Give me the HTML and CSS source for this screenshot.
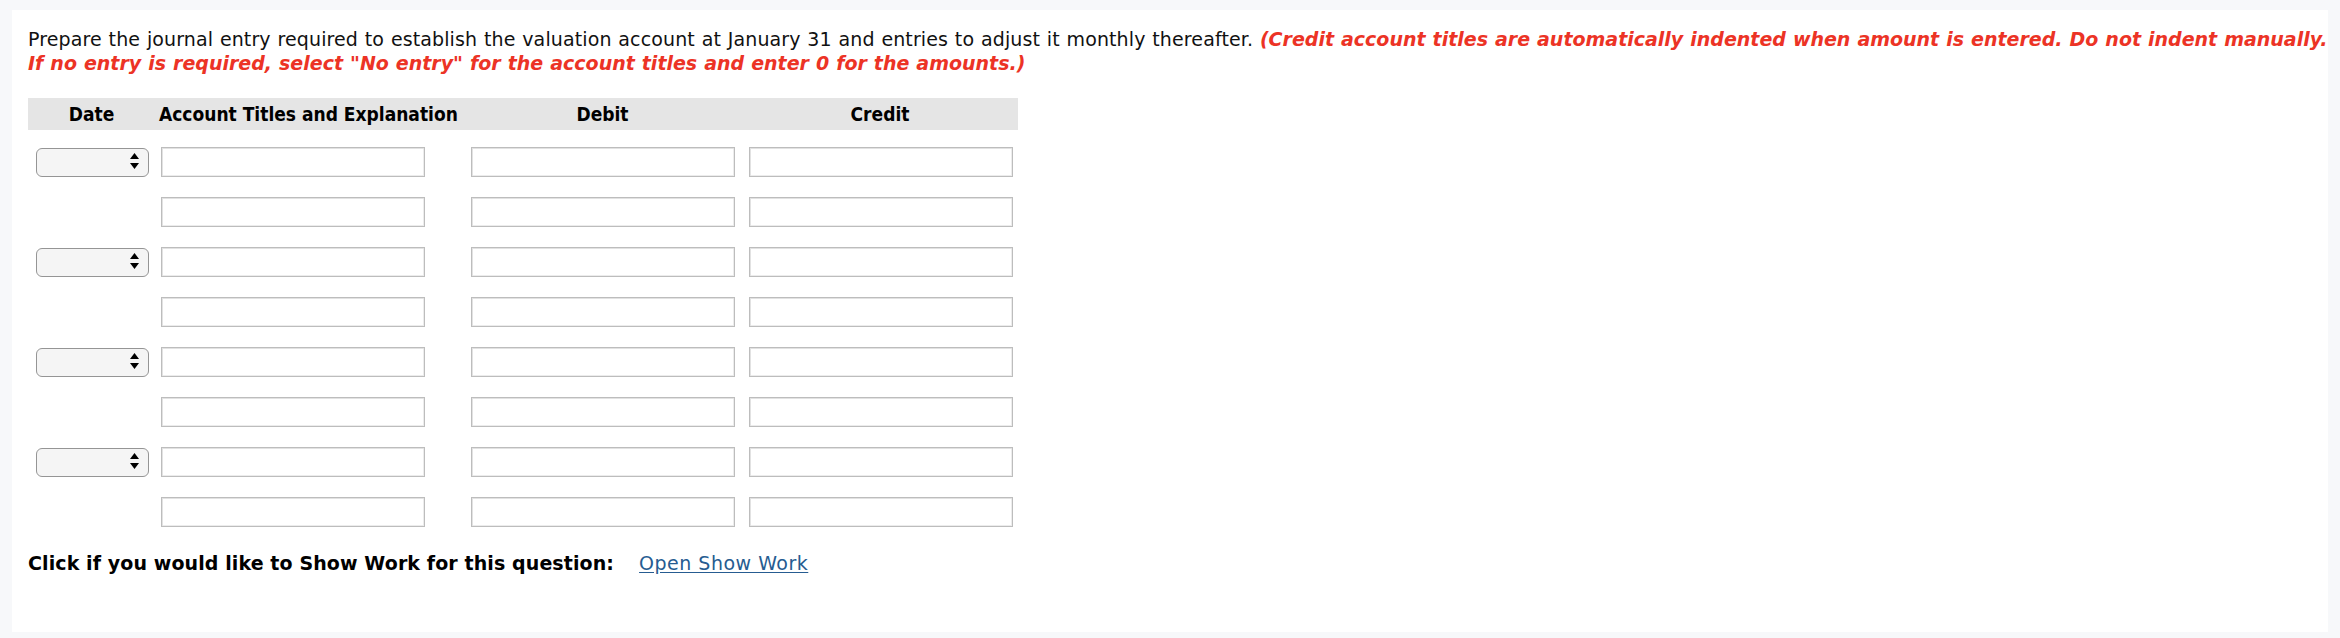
FILE: index.html
```html
<!DOCTYPE html>
<html lang="en">
<head>
<meta charset="utf-8">
<title>Journal entry</title>
<link rel="stylesheet" href="styles.css">
</head>
<body>
<div class="panel">
  <p class="prompt">Prepare the journal entry required to establish the valuation account at January 31 and entries to adjust it monthly thereafter. <em class="note">(Credit account titles are automatically indented when amount is entered. Do not indent manually.<br>If no entry is required, select "No entry" for the account titles and enter 0 for the amounts.)</em></p>

  <div class="journal">
    <div class="jhead">
      <div class="h-date">Date</div>
      <div class="h-acct">Account Titles and Explanation</div>
      <div class="h-debit">Debit</div>
      <div class="h-credit">Credit</div>
    </div>
    <div class="jbody">
      <div class="jrow">
        <div class="c-date"><div class="datesel"><svg class="arrows" width="9" height="16" viewBox="0 0 9 16"><path d="M4.5 0 L9 6 H0 Z"/><path d="M0 10 H9 L4.5 16 Z"/></svg></div></div>
        <div class="c-acct"><input class="field" type="text"></div>
        <div class="c-debit"><input class="field" type="text"></div>
        <div class="c-credit"><input class="field" type="text"></div>
      </div>
      <div class="jrow">
        <div class="c-date"></div>
        <div class="c-acct"><input class="field" type="text"></div>
        <div class="c-debit"><input class="field" type="text"></div>
        <div class="c-credit"><input class="field" type="text"></div>
      </div>
      <div class="jrow">
        <div class="c-date"><div class="datesel"><svg class="arrows" width="9" height="16" viewBox="0 0 9 16"><path d="M4.5 0 L9 6 H0 Z"/><path d="M0 10 H9 L4.5 16 Z"/></svg></div></div>
        <div class="c-acct"><input class="field" type="text"></div>
        <div class="c-debit"><input class="field" type="text"></div>
        <div class="c-credit"><input class="field" type="text"></div>
      </div>
      <div class="jrow">
        <div class="c-date"></div>
        <div class="c-acct"><input class="field" type="text"></div>
        <div class="c-debit"><input class="field" type="text"></div>
        <div class="c-credit"><input class="field" type="text"></div>
      </div>
      <div class="jrow">
        <div class="c-date"><div class="datesel"><svg class="arrows" width="9" height="16" viewBox="0 0 9 16"><path d="M4.5 0 L9 6 H0 Z"/><path d="M0 10 H9 L4.5 16 Z"/></svg></div></div>
        <div class="c-acct"><input class="field" type="text"></div>
        <div class="c-debit"><input class="field" type="text"></div>
        <div class="c-credit"><input class="field" type="text"></div>
      </div>
      <div class="jrow">
        <div class="c-date"></div>
        <div class="c-acct"><input class="field" type="text"></div>
        <div class="c-debit"><input class="field" type="text"></div>
        <div class="c-credit"><input class="field" type="text"></div>
      </div>
      <div class="jrow">
        <div class="c-date"><div class="datesel"><svg class="arrows" width="9" height="16" viewBox="0 0 9 16"><path d="M4.5 0 L9 6 H0 Z"/><path d="M0 10 H9 L4.5 16 Z"/></svg></div></div>
        <div class="c-acct"><input class="field" type="text"></div>
        <div class="c-debit"><input class="field" type="text"></div>
        <div class="c-credit"><input class="field" type="text"></div>
      </div>
      <div class="jrow">
        <div class="c-date"></div>
        <div class="c-acct"><input class="field" type="text"></div>
        <div class="c-debit"><input class="field" type="text"></div>
        <div class="c-credit"><input class="field" type="text"></div>
      </div>
    </div>
  </div>

  <div class="showwork">
    <span class="sw-label">Click if you would like to Show Work for this question:</span>
    <a class="sw-link" href="#">Open Show Work</a>
  </div>
</div>
</body>
</html>
```

FILE: styles.css
```css
html, body {
  margin: 0;
  padding: 0;
}
body {
  background: #f7f8fa;
  font-family: "DejaVu Sans", Verdana, sans-serif;
  color: #111;
}
.panel {
  box-sizing: border-box;
  margin: 10px 12px 0 12px;
  height: 622px;
  background: #ffffff;
  padding: 17px 0 0 16px;
}
.prompt {
  margin: 0;
  font-size: 19px;
  line-height: 24px;
  white-space: nowrap;
  color: #111;
  letter-spacing: 0.12px;
  word-spacing: 0.6px;
}
.note {
  font-weight: bold;
  font-style: italic;
  color: #ec3325;
  letter-spacing: 0;
  word-spacing: 0.4px;
}
.journal {
  margin-top: 23px;
  width: 990px;
}
.jhead,
.jrow {
  display: grid;
  grid-template-columns: 127px 308px 279px 276px;
}
.jhead {
  height: 32px;
  background: #e5e5e5;
  align-items: center;
  font-family: "DejaVu Sans Condensed", "DejaVu Sans", sans-serif;
  font-stretch: condensed;
  font-weight: bold;
  font-size: 19px;
  color: #000;
}
.h-date,
.h-debit,
.h-credit {
  text-align: center;
}
.h-acct {
  padding-left: 4px;
  white-space: nowrap;
}
.jbody {
  padding-top: 17px;
  display: flex;
  flex-direction: column;
  gap: 20px;
}
.jrow {
  height: 30px;
}
.c-date {
  padding-left: 8px;
  padding-top: 1px;
}
.c-acct {
  padding-left: 6px;
}
.c-debit {
  padding-left: 8px;
}
.c-credit {
  padding-left: 7px;
}
.field {
  display: block;
  box-sizing: border-box;
  width: 264px;
  height: 30px;
  margin: 0;
  padding: 0 4px;
  border: 1px solid #bdbdbd;
  box-shadow: inset 1px 1px 0 #e2e2e2, inset -1px -1px 0 #ececec;
  border-radius: 0;
  background: #fff;
  outline: none;
}
.datesel {
  box-sizing: border-box;
  width: 113px;
  height: 29px;
  border: 1.5px solid #959595;
  border-radius: 6px;
  background: #f5f5f5;
  display: flex;
  justify-content: flex-end;
  align-items: flex-start;
  padding: 4px 9px 0 0;
}
.arrows {
  display: block;
  fill: #000;
}
.showwork {
  margin-top: 24px;
  font-size: 19px;
  line-height: 24px;
  display: flex;
  align-items: baseline;
  gap: 25px;
}
.sw-label {
  font-weight: bold;
  color: #000;
  letter-spacing: 0.1px;
}
.sw-link {
  color: #265c91;
  text-decoration: underline;
  text-underline-offset: 2px;
  letter-spacing: 0.5px;
}
```
